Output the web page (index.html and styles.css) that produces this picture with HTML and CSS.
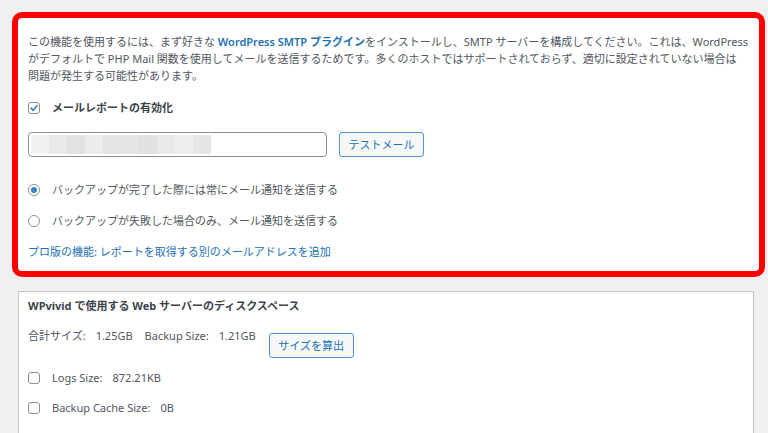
FILE: index.html
```html
<!DOCTYPE html>
<html lang="ja">
<head>
<meta charset="utf-8">
<link rel="stylesheet" href="styles.css">
</head>
<body>
<div class="page">
  <div class="highlight">
    <p class="intro">この機能を使用するには、まず好きな <a class="link strong" href="#">WordPress SMTP プラグイン</a>をインストールし、SMTP サーバーを構成してください。これは、WordPress<br>がデフォルトで PHP Mail 関数を使用してメールを送信するためです。多くのホストではサポートされておらず、適切に設定されていない場合は<br>問題が発生する可能性があります。</p>
    <label class="row check-row">
      <span class="checkbox checked"><svg viewBox="0 0 12 12" width="12" height="12"><path d="M2.4 6.2 L5 8.8 L9.8 3" fill="none" stroke="#3582c4" stroke-width="1.9" stroke-linecap="round" stroke-linejoin="round"/></svg></span>
      <span class="bold">メールレポートの有効化</span>
    </label>
    <div class="row input-row">
      <div class="input"><span class="blur"></span></div>
      <button class="btn btn-test">テストメール</button>
    </div>
    <label class="row radio-row first">
      <span class="radio checked"></span>
      <span>バックアップが完了した際には常にメール通知を送信する</span>
    </label>
    <label class="row radio-row">
      <span class="radio"></span>
      <span>バックアップが失敗した場合のみ、メール通知を送信する</span>
    </label>
    <a class="link pro" href="#">プロ版の機能: レポートを取得する別のメールアドレスを追加</a>
  </div>

  <div class="panel">
    <div class="panel-title">WPvivid で使用する Web サーバーのディスクスペース</div>
    <div class="size-row">
      <span class="size-text">合計サイズ:<span class="val">1.25GB</span><span class="sp">Backup Size:</span><span class="val">1.21GB</span></span>
      <button class="btn btn-calc">サイズを算出</button>
    </div>
    <label class="row opt-row first">
      <span class="checkbox"></span>
      <span>Logs Size:<span class="val">872.21KB</span></span>
    </label>
    <label class="row opt-row">
      <span class="checkbox"></span>
      <span>Backup Cache Size:<span class="val">0B</span></span>
    </label>
  </div>
</div>
</body>
</html>
```
FILE: styles.css
```css
html, body {
  margin: 0;
  padding: 0;
  background: #f0f0f1;
  height: 100%;
  overflow: hidden;
}
body {
  font-family: "Noto Sans", "Noto Sans CJK JP", sans-serif;
  font-size: 11px;
  color: #50575e;
}
.page {
  padding: 12px 0 0 12px;
}
.highlight {
  border: 6px solid #ff0000;
  border-radius: 10px;
  background: #fff;
  padding: 15px 10px 11px 10px;
  box-sizing: content-box;
  width: 721px;
}
.intro {
  margin: 0;
  line-height: 17px;
  white-space: nowrap;
}
.link {
  color: #2271b1;
  text-decoration: none;
}
.strong {
  font-weight: 600;
}
.bold {
  font-weight: 700;
  color: #3c434a;
}
.row {
  display: flex;
  align-items: center;
  line-height: 17px;
}
.check-row {
  margin-top: 15px;
  gap: 12px;
}
.checkbox {
  width: 12px;
  height: 12px;
  border: 1px solid #8c8f94;
  border-radius: 3px;
  box-sizing: border-box;
  display: flex;
  align-items: center;
  justify-content: center;
  background: #fff;
  flex: none;
}
.checkbox svg {
  display: block;
}
.input-row {
  margin-top: 16px;
  gap: 12px;
}
.input {
  width: 299px;
  height: 25px;
  border: 1px solid #8c8f94;
  border-radius: 4px;
  box-sizing: border-box;
  padding: 2px 0 2px 2px;
  display: flex;
}
.blur {
  width: 180px;
  height: 19px;
  background: linear-gradient(90deg,
    #f1f1f1 0 18px, #e9e9e9 18px 36px, #e2e2e2 36px 54px, #ececec 54px 72px,
    #e4e4e4 72px 90px, #e6e6e6 90px 108px, #e1e1e1 108px 126px, #e9e9e9 126px 144px,
    #eeeeee 144px 162px, #e6e6e6 162px 180px);
}
.btn {
  font-family: inherit;
  font-size: 11px;
  color: #2271b1;
  background: #f6f7f7;
  border: 1px solid #4f94d4;
  border-radius: 3px;
  height: 25px;
  padding: 0 9px;
  line-height: 23px;
  box-sizing: border-box;
  white-space: nowrap;
  flex: none;
}
.btn-test {
  width: 85px;
  padding: 0;
}
.radio-row {
  gap: 12px;
  margin-top: 14px;
}
.radio-row.first {
  margin-top: 24px;
}
.radio {
  width: 12px;
  height: 12px;
  border: 1px solid #8c8f94;
  border-radius: 50%;
  box-sizing: border-box;
  display: flex;
  align-items: center;
  justify-content: center;
  flex: none;
}
.radio.checked::after {
  content: "";
  width: 6px;
  height: 6px;
  border-radius: 50%;
  background: #3582c4;
}
.pro {
  display: block;
  margin-top: 14px;
  line-height: 17px;
}
.panel {
  margin: 14px 0 0 6px;
  width: 736px;
  height: 150px;
  background: #fff;
  border: 1px solid #c3c4c7;
  box-sizing: border-box;
  padding: 5px 10px 0 9px;
}
.panel-title {
  font-weight: 700;
  color: #3c434a;
  line-height: 17px;
}
.size-row {
  display: flex;
  align-items: flex-start;
  margin-top: 13px;
  gap: 13px;
}
.size-text {
  line-height: 17px;
  white-space: nowrap;
}
.val {
  margin-left: 10px;
}
.sp {
  margin-left: 12px;
}
.btn-calc {
  position: relative;
  top: -6px;
  margin-top: 12px;
  width: 85px;
  padding: 0;
}
.opt-row {
  gap: 12px;
  margin-top: 5px;
}
.opt-row + .opt-row {
  margin-top: 13px;
}
```
